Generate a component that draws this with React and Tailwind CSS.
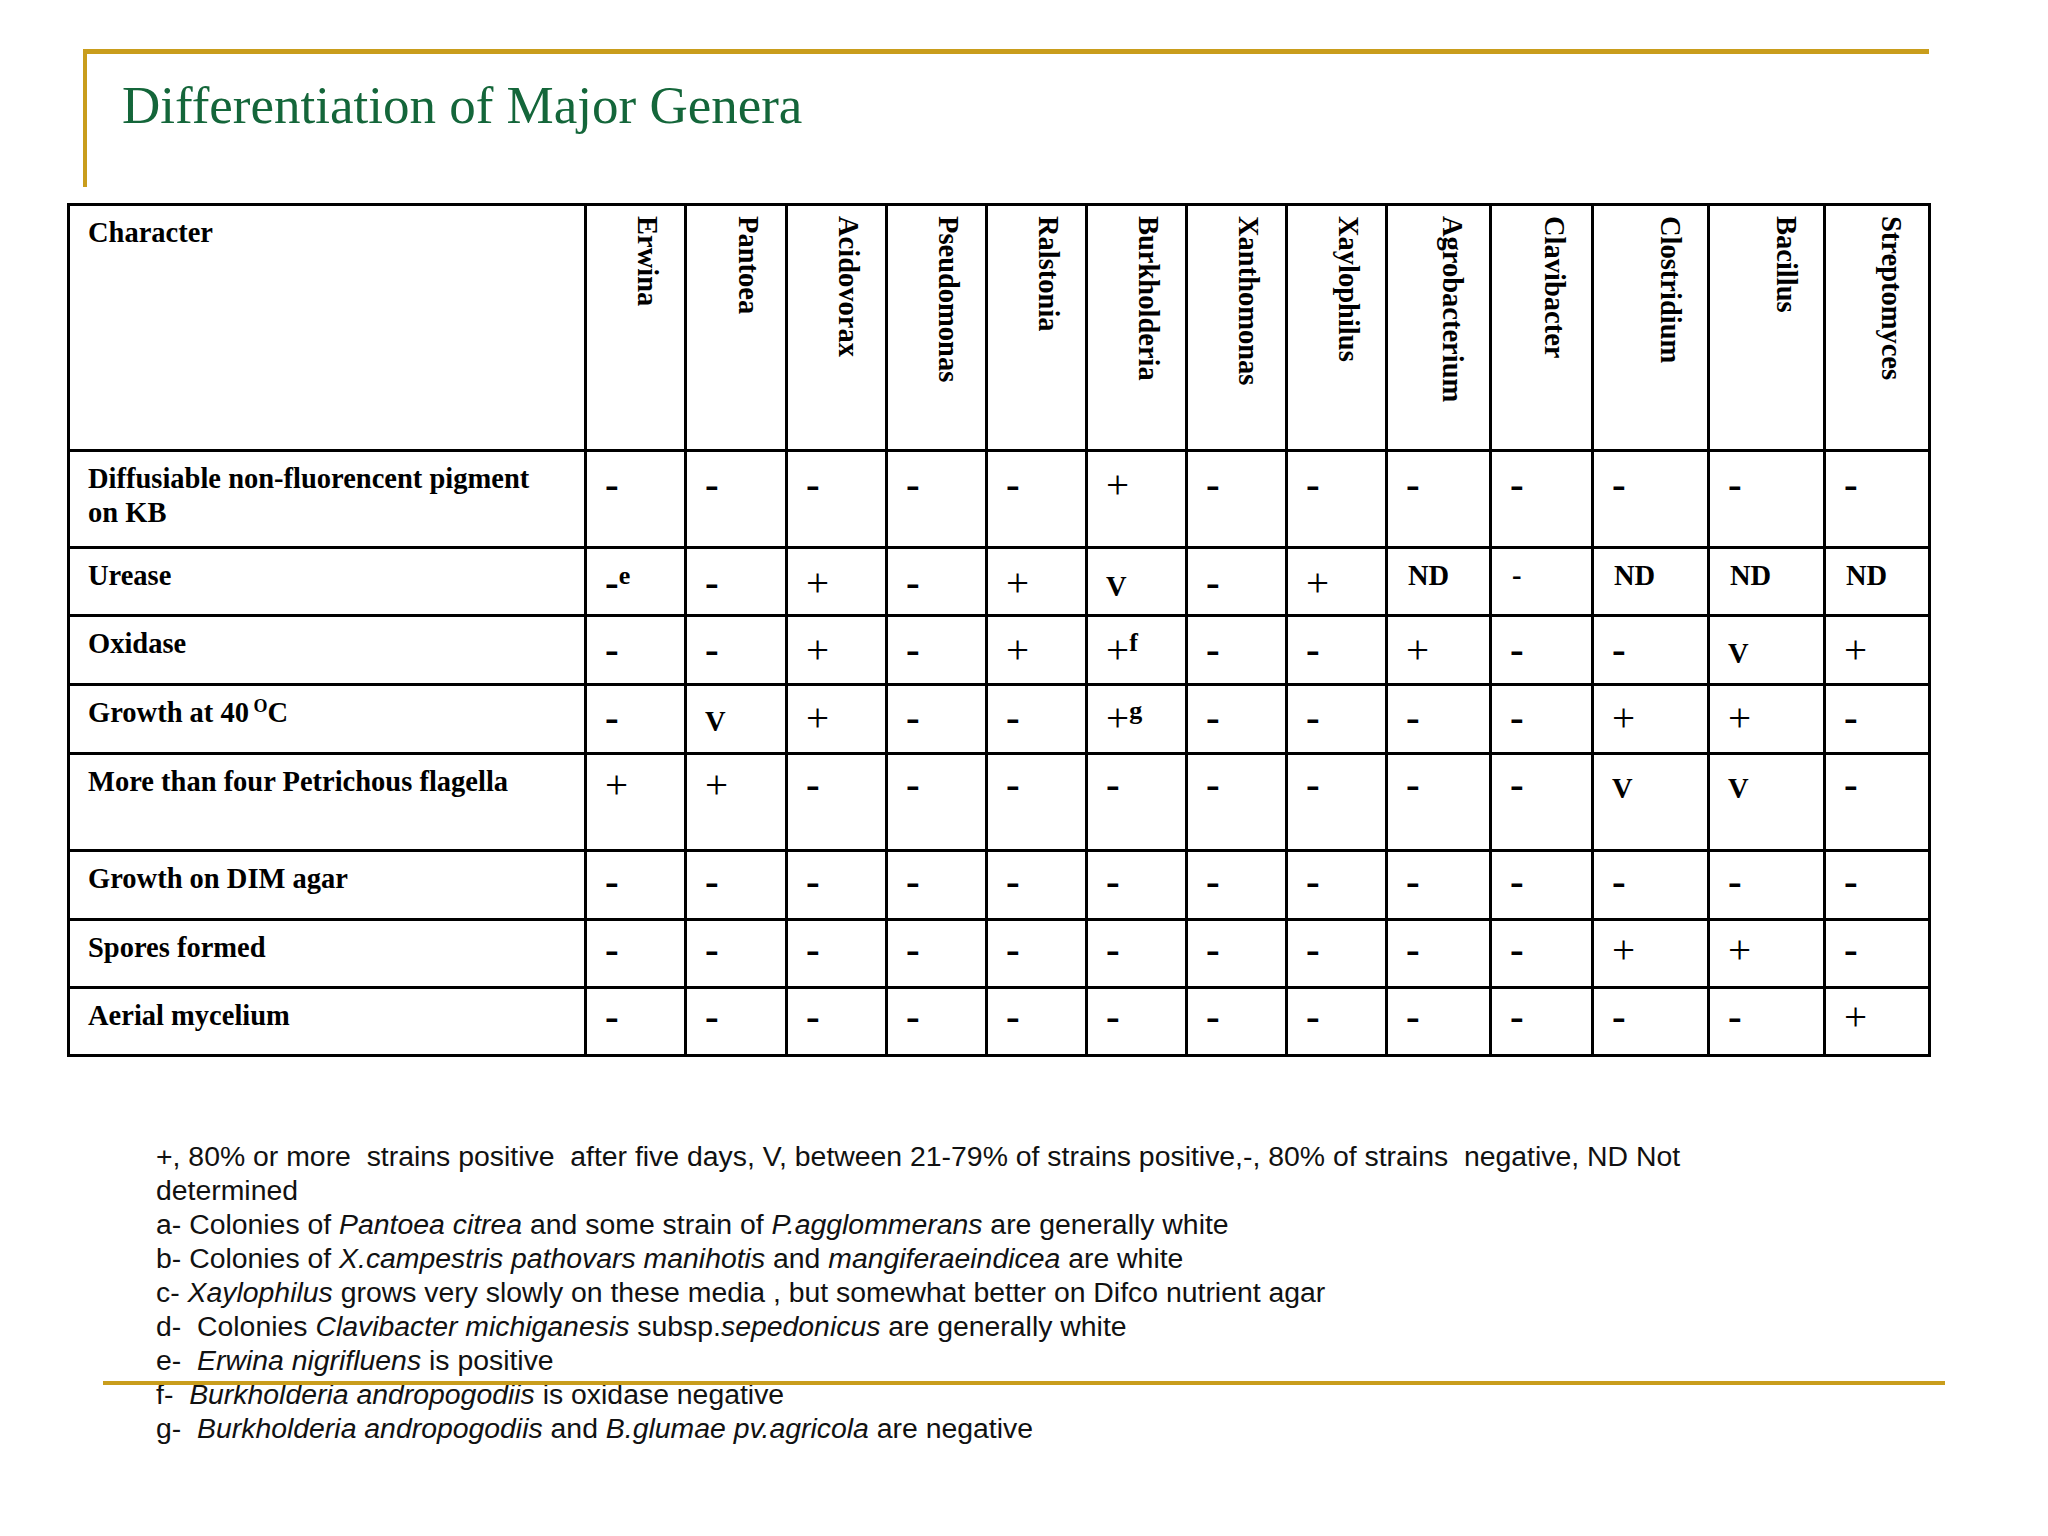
const genera = [
  'Erwina', 'Pantoea', 'Acidovorax', 'Pseudomonas', 'Ralstonia', 'Burkholderia', 'Xanthomonas',
  'Xaylophilus', 'Agrobacterium', 'Clavibacter', 'Clostridium', 'Bacillus', 'Streptomyces',
];

// pt = top padding of the value line, tuned per row
const rows = [
  { key: 'kb', pt: 'pt-[12px]', vals: ['-', '-', '-', '-', '-', '+', '-', '-', '-', '-', '-', '-', '-'] },
  { key: 'urease', pt: 'pt-[13px]', vals: ['-e', '-', '+', '-', '+', 'V', '-', '+', 'ND', 's-', 'ND', 'ND', 'ND'] },
  { key: 'oxidase', pt: 'pt-[12px]', vals: ['-', '-', '+', '-', '+', '+f', '-', '-', '+', '-', '-', 'V', '+'] },
  { key: 'growth40', pt: 'pt-[11px]', vals: ['-', 'V', '+', '-', '-', '+g', '-', '-', '-', '-', '+', '+', '-'] },
  { key: 'flagella', pt: 'pt-[9px]', vals: ['+', '+', '-', '-', '-', '-', '-', '-', '-', '-', 'V', 'V', '-'] },
  { key: 'dim', pt: 'pt-[9px]', vals: ['-', '-', '-', '-', '-', '-', '-', '-', '-', '-', '-', '-', '-'] },
  { key: 'spores', pt: 'pt-[8px]', vals: ['-', '-', '-', '-', '-', '-', '-', '-', '-', '-', '+', '+', '-'] },
  { key: 'aerial', pt: 'pt-[7px]', vals: ['-', '-', '-', '-', '-', '-', '-', '-', '-', '-', '-', '-', '+'] },
];

const labels = {
  kb: <>Diffusiable non-fluorencent pigment<br />on KB</>,
  urease: 'Urease',
  oxidase: 'Oxidase',
  growth40: (
    <>
      Growth at 40
      <span className="text-[18px] leading-none align-[10px]"> O</span>C
    </>
  ),
  flagella: 'More than four Petrichous flagella',
  dim: 'Growth on DIM agar',
  spores: 'Spores formed',
  aerial: 'Aerial mycelium',
};

function Value({ v, pt }) {
  if (v === 'ND' || v === 's-') {
    return (
      <div className="bg-white pl-[20px] pt-[10px] text-[28.5px] leading-[34px] font-bold">
        {v === 'ND' ? 'ND' : '-'}
      </div>
    );
  }
  const mark = v[0];
  const sup = v.slice(1);
  return (
    <div className={`bg-white pl-[18px] ${pt} text-[41px] leading-[40px]`}>
      {mark === '-' && <span className="font-bold">-</span>}
      {mark === '+' && <span>+</span>}
      {mark === 'V' && <span className="font-bold text-[28.5px] leading-none">V</span>}
      {sup && <span className="font-bold text-[26px] leading-none align-[12px]">{sup}</span>}
    </div>
  );
}

export default function App() {
  return (
    <div className="relative w-[2048px] h-[1536px] bg-white flex flex-col items-start overflow-hidden text-black font-['Liberation_Serif',serif]">
      {/* Title frame */}
      <div className="ml-[83px] mt-[49px] w-[1846px] h-[138px] border-t-[5px] border-l-4 border-[#c99d1c] pl-[35px] pt-[21px]">
        <h1 className="text-[53px] leading-[60px] text-[#14663a] font-normal">Differentiation of Major Genera</h1>
      </div>

      {/* Table */}
      <div className="ml-[67px] mt-[16px] grid grid-cols-[514px_97px_98px_97px_97px_97px_97px_97px_97px_101px_99px_113px_113px_102px] grid-rows-[243px_94px_65px_66px_66px_94px_66px_65px_65px] gap-[3px] p-[3px] bg-black">
        <div className="bg-white pl-[18px] pt-[10px] text-[28.5px] leading-[34px] font-bold">Character</div>
        {genera.map((g) => (
          <div key={g} className="bg-white flex justify-end pt-[10px] pr-[20px]">
            <div className="[writing-mode:vertical-rl] text-[28.5px] leading-[34px] font-bold">{g}</div>
          </div>
        ))}
        {rows.map((r) => (
          <div key={r.key} className="contents">
            <div className="bg-white pl-[18px] pt-[10px] text-[28.5px] leading-[34px] font-bold">{labels[r.key]}</div>
            {r.vals.map((v, i) => (
              <Value key={i} v={v} pt={r.pt} />
            ))}
          </div>
        ))}
      </div>

      {/* Footnotes */}
      <div className="ml-[156px] mt-[82px] font-['Liberation_Sans',Arial,sans-serif] text-[28.4px] leading-[34px] whitespace-pre text-[#111]">
        <div>+, 80% or more  strains positive  after five days, V, between 21-79% of strains positive,-, 80% of strains  negative, ND Not</div>
        <div>determined</div>
        <div>a- Colonies of <i>Pantoea citrea</i> and some strain of <i>P.agglommerans</i> are generally white</div>
        <div>b- Colonies of <i>X.campestris pathovars manihotis</i> and <i>mangiferaeindicea</i> are white</div>
        <div>c- <i>Xaylophilus</i> grows very slowly on these media , but somewhat better on Difco nutrient agar</div>
        <div>d-  Colonies <i>Clavibacter michiganesis</i> subsp.<i>sepedonicus</i> are generally white</div>
        <div>e-  <i>Erwina nigrifluens</i> is positive</div>
        <div>f-  <i>Burkholderia andropogodiis</i> is oxidase negative</div>
        <div>g-  <i>Burkholderia andropogodiis</i> and <i>B.glumae pv.agricola</i> are negative</div>
      </div>

      {/* Bottom gold rule, drawn over the footnotes */}
      <div className="absolute left-[103px] top-[1381px] w-[1842px] h-[4px] bg-[#c99d1c]" />
    </div>
  );
}
